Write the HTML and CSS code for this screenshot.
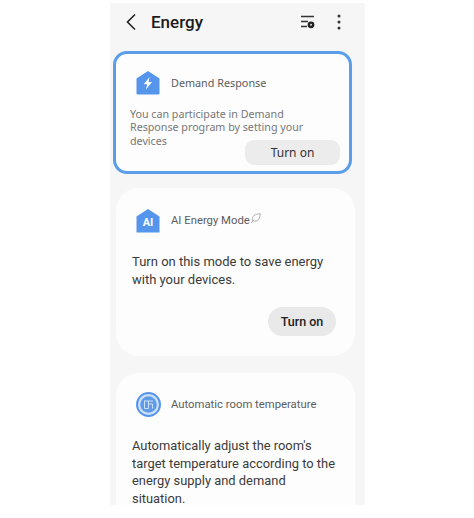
FILE: index.html
```html
<!DOCTYPE html>
<html lang="en">
<head>
<meta charset="utf-8">
<title>Energy</title>
<link rel="stylesheet" href="styles.css">
</head>
<body>
<main class="phone">
  <header class="topbar">
    <svg class="back" width="12" height="18" viewBox="0 0 12 18"><path d="M10 1.500 2.500 9l7.500 7.500" fill="none" stroke="#222" stroke-width="1.600"/></svg>
    <h1 class="title">Energy</h1>
    <svg class="schedule" width="15" height="14" viewBox="0 0 15 14"><path d="M1 1.500h13M1 6.500h7M1 11.500h6" fill="none" stroke="#333" stroke-width="1.400"/><circle cx="11" cy="9.800" r="3.400" fill="#222"/><circle cx="11" cy="9.800" r="1" fill="#ddd"/></svg>
    <svg class="more" width="4" height="16" viewBox="0 0 4 16"><circle cx="2" cy="2" r="1.500" fill="#333"/><circle cx="2" cy="8" r="1.500" fill="#333"/><circle cx="2" cy="14" r="1.500" fill="#333"/></svg>
  </header>

  <section class="card card-active">
    <div class="card-head head-active">
      <svg width="24" height="24" viewBox="0 0 24 24"><path d="M12 0 23.500 7.500V22.500a1 1 0 0 1-1 1H1.500a1 1 0 0 1-1-1V7.500Z" fill="#5596ec"/><path d="M13.500 6 7.800 13.200h3.400L10 18.500l6-7.400h-3.500Z" fill="#fff"/></svg>
      <span class="card-name name-active">Demand Response</span>
    </div>
    <p class="active-text">You can participate in Demand Response program by setting your devices</p>
    <div class="wide-wrap"><span class="btn-wide">Turn on</span></div>
  </section>

  <section class="card card-mode">
    <div class="card-head">
      <svg width="24" height="24" viewBox="0 0 24 24"><path d="M12 0 23.500 7.500V23.500H.5V7.500Z" fill="#5596ec"/></svg>
      <span class="ai-label">AI</span>
      <span class="card-name">AI Energy Mode</span>
      <svg class="leaf" width="11" height="11" viewBox="0 0 11 11"><path d="M1 10 4 6.500M2.500 7.500C1.500 3 5 1 10.300.8 10 6 7.500 9 3 8" fill="none" stroke="#999" stroke-width=".8"/></svg>
    </div>
    <p class="body-text">Turn on this mode to save energy with your devices.</p>
    <div class="btn-row"><span class="btn">Turn on</span></div>
  </section>

  <section class="card card-temp">
    <div class="card-head head-temp">
      <svg width="25" height="25" viewBox="0 0 25 25"><circle cx="12.500" cy="12.500" r="11.500" fill="#cfe1f8" stroke="#5596ec" stroke-width="2"/><circle cx="12.500" cy="12.500" r="8.300" fill="#5f9ce8"/><path d="M8 9h9M8.500 9v7.500h4V12h4v4.500M12.500 9v3" fill="none" stroke="#e8f1fc" stroke-width=".8"/></svg>
      <span class="card-name">Automatic room temperature</span>
    </div>
    <p class="body-text text-temp">Automatically adjust the room's target temperature according to the energy supply and demand situation.</p>
  </section>
</main>
</body>
</html>
```
FILE: styles.css
```css
html, body {
  margin: 0;
  height: 518px;
  overflow: hidden;
  background: #fff;
}

.phone {
  box-sizing: border-box;
  width: 255px;
  height: 502px;
  margin: 3px 0 0 110px;
  background: #f6f6f6;
  overflow: hidden;
  font-family: Roboto, "Liberation Sans", sans-serif;
}

.topbar {
  display: flex;
  align-items: center;
  height: 38px;
  padding: 0 24px 0 15px;
  margin-bottom: 10px;
}

.title {
  flex: 1;
  margin: 0 0 0 14px;
  font-size: 17px;
  font-weight: 500;
  color: #1c1c1c;
}

.more {
  margin-left: 22px;
}

.card {
  box-sizing: border-box;
  width: 239px;
  background: #fdfdfd;
  border-radius: 23px;
}

.card-active {
  height: 123px;
  margin: 0 0 14px 3px;
  padding: 16px 9px 0 14px;
  border: 3px solid #5a9eea;
  border-radius: 14px;
  font-family: "Noto Sans", sans-serif;
}

.card-mode {
  height: 168px;
  margin: 0 0 17px 6px;
  padding: 20px 19px 0 16px;
}

.card-temp {
  height: 180px;
  margin-left: 6px;
  padding: 19px 18px 0 16px;
}

.card-head {
  position: relative;
  display: flex;
  align-items: center;
  height: 25px;
  padding-left: 4px;
  gap: 11px;
}

.head-active {
  padding-left: 6px;
}

.head-temp {
  gap: 10px;
}

.ai-label {
  position: absolute;
  left: 4px;
  top: 5px;
  width: 24px;
  text-align: center;
  color: #fff;
  font-size: 11px;
  line-height: 20px;
  font-weight: 700;
}

.card-name {
  font-size: 11.300px;
  color: #5c5c5c;
}

.name-active {
  font-size: 10.800px;
}

.leaf {
  margin: -5px 0 0 -11px;
}

.active-text {
  width: 190px;
  margin: 12.500px 0 0;
  font-size: 10.700px;
  line-height: 13.500px;
  color: #777;
}

.wide-wrap {
  display: flex;
  justify-content: flex-end;
  margin-top: -8.500px;
}

.btn-wide {
  display: block;
  width: 95px;
  height: 25px;
  border-radius: 9px;
  background: #ececec;
  color: #333;
  font-size: 12px;
  line-height: 25px;
  text-align: center;
}

.body-text {
  margin: 20px 0 0;
  font-size: 13px;
  line-height: 18px;
  color: #3a3a3a;
}

.text-temp {
  margin-top: 20px;
  font-size: 12.900px;
  line-height: 17.700px;
}

.btn-row {
  display: flex;
  justify-content: flex-end;
  margin-top: 18px;
}

.btn {
  display: block;
  width: 68px;
  height: 29px;
  border-radius: 15px;
  background: #e9e9e9;
  color: #222;
  font-size: 12.500px;
  font-weight: 500;
  line-height: 29px;
  text-align: center;
}
```
